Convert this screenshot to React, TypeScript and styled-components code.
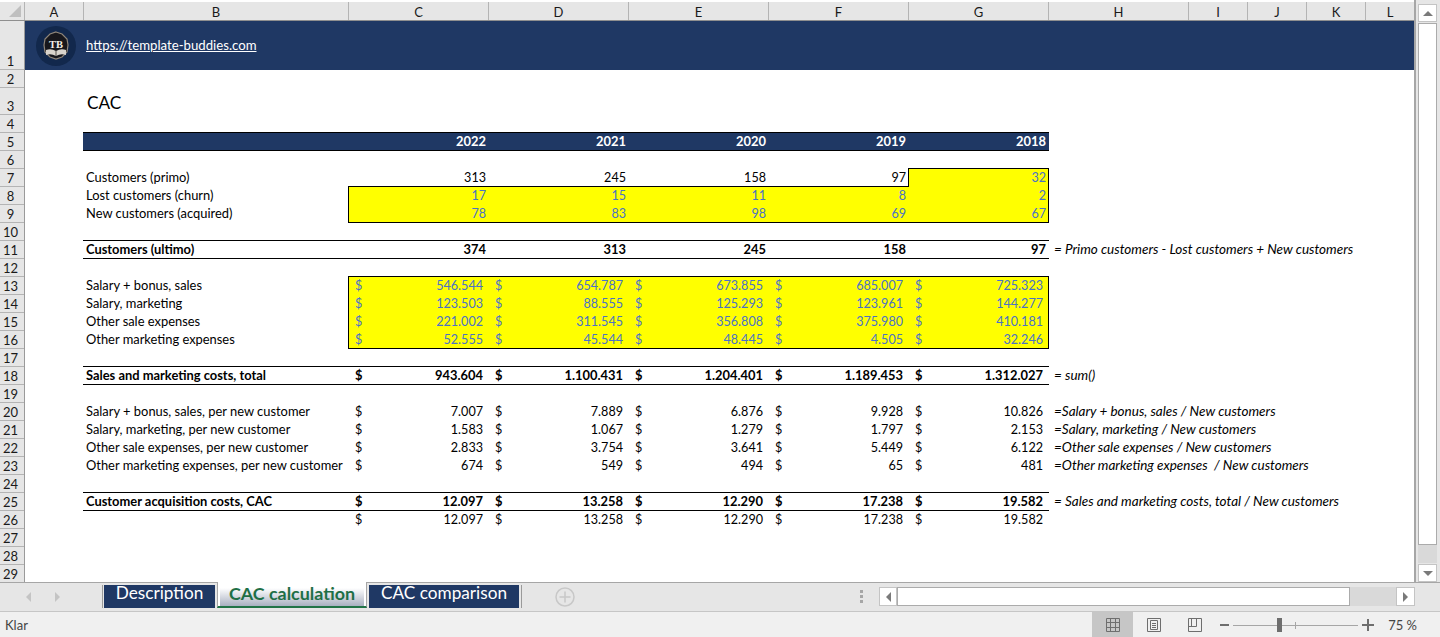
import React, { FC } from "react";
import styled, { createGlobalStyle } from "styled-components";

const NAVY = "#1f3864";
const INPUT_BLUE = "#4a72c6";
const FONT = `Lato, "Open Sans", sans-serif`;

const COLUMNS = [
  { name: "A", width: 59 },
  { name: "B", width: 265 },
  { name: "C", width: 140 },
  { name: "D", width: 140 },
  { name: "E", width: 140 },
  { name: "F", width: 140 },
  { name: "G", width: 140 },
  { name: "H", width: 140 },
  { name: "I", width: 59 },
  { name: "J", width: 59 },
  { name: "K", width: 59 },
  { name: "L", width: 49 },
];

const ROW_TEMPLATE = "58px 266px repeat(6, 140px) 59px 59px 59px 49px";

const ROW_HEIGHTS: Record<number, number> = { 1: 49, 3: 27 };
const rowHeight = (n: number) => ROW_HEIGHTS[n] || 18;

const GlobalStyle = createGlobalStyle`
  html, body {
    margin: 0;
    padding: 0;
    background: #e6e6e6;
    overflow: hidden;
  }
  #root {
    width: 1440px;
    height: 637px;
  }
`;

const Window = styled.div`
  width: 1440px;
  height: 637px;
  display: flex;
  flex-direction: column;
  font-family: ${FONT};
  color: #000;
  overflow: hidden;
`;

const Workspace = styled.div`
  display: flex;
  height: 583px;
  flex: none;
  background: #e6e6e6;
  border-bottom: 1px solid #a6a6a6;
  box-sizing: border-box;
`;

const SheetArea = styled.div`
  width: 1416px;
  flex: none;
  display: flex;
  flex-direction: column;
  border-right: 2px solid #a6a6a6;
  box-sizing: border-box;
  overflow: hidden;
`;

const ColumnHeaders = styled.div`
  height: 21px;
  flex: none;
  display: flex;
  box-sizing: border-box;
  padding-top: 2px;
  background: linear-gradient(#fff 2px, #e6e6e6 2px);
  border-bottom: 1px solid #8f8f8f;
`;

const Corner = styled.div`
  width: 25px;
  flex: none;
  position: relative;
  box-sizing: border-box;
  border-right: 1px solid #b4b4b4;
  &::after {
    content: "";
    position: absolute;
    right: 3px;
    bottom: 3px;
    border-style: solid;
    border-width: 0 0 12px 12px;
    border-color: transparent transparent #bfbfbf transparent;
  }
`;

const ColumnHeader = styled.div<{ $width: number }>`
  width: ${(p) => p.$width}px;
  flex: none;
  box-sizing: border-box;
  border-right: 1px solid #b4b4b4;
  text-align: center;
  font-size: 13px;
  line-height: 20px;
  color: #1a1a1a;
`;

const SheetBody = styled.div`
  flex: 1;
  display: flex;
  min-height: 0;
  overflow: hidden;
`;

const RowHeaders = styled.div`
  width: 25px;
  flex: none;
  box-sizing: border-box;
  border-right: 1px solid #9a9a9a;
`;

const RowHeader = styled.div<{ $height: number }>`
  height: ${(p) => p.$height}px;
  box-sizing: border-box;
  border-bottom: 1px solid #b4b4b4;
  display: flex;
  align-items: flex-end;
  justify-content: center;
  padding-right: 3px;
  font-size: 13px;
  line-height: 16px;
  color: #1a1a1a;
`;

const Cells = styled.div`
  flex: 1;
  min-width: 0;
  background: #fff;
`;

const Row = styled.div<{ $height: number }>`
  display: grid;
  grid-template-columns: ${ROW_TEMPLATE};
  height: ${(p) => p.$height}px;
  font-size: 12.6px;
  line-height: 18px;
`;

const Banner = styled.div`
  grid-column: 1 / -1;
  background: ${NAVY};
  display: flex;
  align-items: center;
  padding-left: 11px;
  gap: 10px;
  height: 49px;
`;

const BannerLink = styled.a`
  color: #fff;
  font-size: 13.2px;
  margin-bottom: 2px;
  text-decoration: underline;
`;

const Title = styled.div`
  grid-column: 2;
  padding-left: 4px;
  font-size: 17.2px;
  line-height: 30px;
`;

type Edges = { t?: boolean; b?: boolean; l?: boolean; r?: boolean };

const edgeShadow = (e: Edges) => {
  const parts: string[] = [];
  if (e.t) parts.push("0 -1px 0 #000");
  if (e.l) parts.push("-1px 0 0 #000");
  if (e.t && e.l) parts.push("-1px -1px 0 #000");
  if (e.b) parts.push("inset 0 -1px 0 #000");
  if (e.r) parts.push("inset -1px 0 0 #000");
  return parts.length ? parts.join(",") : "none";
};

const Cell = styled.div<{
  $edges?: Edges;
  $fill?: string;
  $bold?: boolean;
  $color?: string;
}>`
  box-sizing: border-box;
  min-width: 0;
  white-space: nowrap;
  background: ${(p) => p.$fill || "transparent"};
  box-shadow: ${(p) => edgeShadow(p.$edges || {})};
  font-weight: ${(p) => (p.$bold ? 700 : 400)};
  color: ${(p) => p.$color || "#000"};
`;

const LabelCell = styled(Cell)`
  grid-column: 2;
  padding-left: 3px;
  font-size: 12.9px;
  line-height: 17px;
`;

const ValueCell = styled(Cell)<{ $money?: boolean }>`
  display: flex;
  justify-content: ${(p) => (p.$money ? "space-between" : "flex-end")};
  padding: 0 ${(p) => (p.$money ? 6 : 3)}px 0 ${(p) => (p.$money ? 6 : 2)}px;
  font-size: ${(p) => (p.$bold ? 12.9 : 12.6)}px;
  line-height: ${(p) => (p.$bold ? 17 : 18)}px;
`;

const NoteCell = styled.div`
  font-style: italic;
  font-size: 13.5px;
  line-height: 17px;
  padding-left: 5px;
  white-space: pre;
`;

const VScroll = styled.div`
  flex: 1;
  display: flex;
  flex-direction: column;
  padding: 4px 0 0 2px;
  gap: 1px;
  box-sizing: border-box;
`;

const ScrollButton = styled.div`
  width: 19px;
  height: 18px;
  flex: none;
  background: #fff;
  border: 1px solid #c4c4c4;
  box-sizing: border-box;
  display: flex;
  align-items: center;
  justify-content: center;
`;

const VTrack = styled.div`
  width: 19px;
  flex: 1;
  background: #d9d9d9;
`;

const VThumb = styled.div`
  height: 522px;
  background: #fff;
  border: 1px solid #ababab;
  box-sizing: border-box;
`;

const Arrow = styled.div<{ $dir: "up" | "down" | "left" | "right"; $color?: string }>`
  width: 0;
  height: 0;
  border-style: solid;
  ${(p) => {
    const c = p.$color || "#7a7a7a";
    switch (p.$dir) {
      case "up":
        return `border-width: 0 5px 5px 5px; border-color: transparent transparent ${c} transparent;`;
      case "down":
        return `border-width: 5px 5px 0 5px; border-color: ${c} transparent transparent transparent;`;
      case "left":
        return `border-width: 5px 5px 5px 0; border-color: transparent ${c} transparent transparent;`;
      default:
        return `border-width: 5px 0 5px 5px; border-color: transparent transparent transparent ${c};`;
    }
  }}
`;

const TabBar = styled.div`
  height: 29px;
  flex: none;
  display: flex;
  align-items: flex-start;
  background: #e6e6e6;
  box-sizing: border-box;
  border-bottom: 1px solid #c6c6c6;
`;

const TabNav = styled.div`
  width: 102px;
  height: 28px;
  flex: none;
  display: flex;
  align-items: center;
  gap: 24px;
  padding-left: 26px;
  box-sizing: border-box;
`;

const TabStrip = styled.div`
  display: flex;
  align-items: flex-start;
  gap: 2px;
  height: 23px;
  margin-top: 2px;
  border-left: 1px solid #9a9a9a;
  border-right: 1px solid #9a9a9a;
  padding: 0 2px 0 1px;
`;

const Tab = styled.div<{ $width: number }>`
  width: ${(p) => p.$width}px;
  height: 23px;
  flex: none;
  box-sizing: border-box;
  text-align: center;
  font-size: 17.2px;
  line-height: 16px;
  color: #fff;
  background: ${NAVY};
`;

const ActiveTab = styled(Tab)`
  height: 26px;
  margin-top: -3px;
  padding-top: 3px;
  font-size: 17.9px;
  font-weight: 700;
  color: #1e6f46;
  background: linear-gradient(#fff 25%, #a9b0c0);
  border-left: 1px solid #a6a6a6;
  border-right: 1px solid #a6a6a6;
  border-bottom: 2px solid #217346;
  box-shadow: inset 2px 0 0 #fff, inset -2px 0 0 #fff;
`;

const AddSheet = styled.div`
  width: 20px;
  height: 20px;
  margin: 4px 0 0 33px;
  flex: none;
  color: #c8c8c8;
`;

const HScrollArea = styled.div`
  margin-left: auto;
  padding: 4px 25px 0 0;
  display: flex;
  align-items: center;
  flex: none;
  box-sizing: border-box;
`;

const SplitDots = styled.div`
  width: 3px;
  height: 13px;
  margin-right: 16px;
  flex: none;
  background: repeating-linear-gradient(#a6a6a6 0 3px, transparent 3px 5px);
`;

const HButton = styled(ScrollButton)`
  height: 19px;
`;

const HButtonLeft = styled(HButton)`
  width: 18px;
`;

const HTrack = styled.div`
  width: 499px;
  height: 19px;
  flex: none;
  background: #d9d9d9;
  display: flex;
`;

const HThumb = styled.div`
  width: 453px;
  background: #fff;
  border: 1px solid #ababab;
  box-sizing: border-box;
`;

const StatusBar = styled.div`
  flex: 1;
  display: flex;
  align-items: center;
  background: #f0f0f0;
  padding-left: 5px;
  font-size: 13px;
  line-height: 22px;
  color: #444;
`;

const StatusRight = styled.div`
  margin-left: auto;
  display: flex;
  align-items: center;
  height: 100%;
`;

const ViewButton = styled.div<{ $active?: boolean }>`
  width: 41px;
  height: 100%;
  display: flex;
  align-items: center;
  justify-content: center;
  background: ${(p) => (p.$active ? "#c6c6c6" : "transparent")};
`;

const Zoom = styled.div`
  display: flex;
  align-items: center;
  margin-left: 5px;
  height: 100%;
`;

const ZoomLabel = styled.div`
  width: 43px;
  margin-right: 23px;
  text-align: right;
  font-size: 13px;
  color: #444;
`;

const Logo: FC = () => (
  <svg width="40" height="40" viewBox="0 0 40 40">
    <circle cx="20" cy="20" r="20" fill="#12284c" />
    <path
      d="M20 6l6 2 5 5 1 6-1 7-5 5-6 2-6-2-5-5-1-7 1-6 5-5z"
      fill="#17171c"
      stroke="#8f867a"
      strokeWidth="1.2"
    />
    <text
      x="20"
      y="22"
      textAnchor="middle"
      fontSize="10.5"
      fontFamily="Liberation Serif, serif"
      fontWeight="700"
      fill="#f2efe9"
    >
      TB
    </text>
    <path d="M10 24 q5 -2 10 1 q5 -3 10 -1 v5 q-5 -2 -10 1 q-5 -3 -10 -1z" fill="#d9d4cc" />
    <path d="M20 25v5" stroke="#55504a" fill="none" />
  </svg>
);

const GridIcon: FC = () => (
  <svg width="14" height="14" viewBox="0 0 14 14" fill="none" stroke="#6e6e6e">
    <path d="M.5.5h13v13H.5zM4.5.5v13M9.5.5v13M.5 4.5h13M.5 9.5h13" />
  </svg>
);

const PageIcon: FC = () => (
  <svg width="14" height="14" viewBox="0 0 14 14" fill="none" stroke="#6e6e6e">
    <path d="M.5.5h13v13H.5zM3.5 2.5h7v9h-7zM5 5.5h4M5 7.5h4M5 9.5h4" />
  </svg>
);

const BreakIcon: FC = () => (
  <svg width="14" height="14" viewBox="0 0 14 14" fill="none" stroke="#6e6e6e">
    <path d="M.5.5h13v13H.5zM.5 8.5h8M3.5.5v8M8.5.5v8" />
  </svg>
);

const ZoomSlider: FC = () => (
  <svg width="154" height="16" viewBox="0 0 154 16">
    <path d="M0 7h9v2H0z" fill="#6e6e6e" />
    <path d="M13 8.5h125" stroke="#a6a6a6" fill="none" />
    <path d="M75.5 5v7" stroke="#a6a6a6" fill="none" />
    <rect x="57" y="1" width="5" height="14" fill="#6e6e6e" />
    <path d="M142 7h12v2h-12zM147 2h2v12h-2z" fill="#6e6e6e" />
  </svg>
);

const years = ["2022", "2021", "2020", "2019", "2018"];

type Values = (string | number)[];

const costRows: [string, Values][] = [
  ["Salary + bonus, sales", ["546.544", "654.787", "673.855", "685.007", "725.323"]],
  ["Salary, marketing", ["123.503", "88.555", "125.293", "123.961", "144.277"]],
  ["Other sale expenses", ["221.002", "311.545", "356.808", "375.980", "410.181"]],
  ["Other marketing expenses", ["52.555", "45.544", "48.445", "4.505", "32.246"]],
];

const perCustomerRows: [string, Values, string][] = [
  ["Salary + bonus, sales, per new customer", ["7.007", "7.889", "6.876", "9.928", "10.826"], "=Salary + bonus, sales / New customers"],
  ["Salary, marketing, per new customer", ["1.583", "1.067", "1.279", "1.797", "2.153"], "=Salary, marketing / New customers"],
  ["Other sale expenses, per new customer", ["2.833", "3.754", "3.641", "5.449", "6.122"], "=Other sale expenses / New customers"],
  ["Other marketing expenses, per new customer", ["674", "549", "494", "65", "481"], "=Other marketing expenses  / New customers"],
];

// yellow input block: outline only on the outer sides
const blockEdges = (col: number, first: boolean, last: boolean): Edges => ({
  t: first,
  b: last,
  l: col === 0,
  r: col === 4,
});

const Spacer: FC<{ n: number }> = ({ n }) => <Row $height={rowHeight(n)} />;

const TotalRow: FC<{ label: string; values: Values; money?: boolean; note?: string }> = ({
  label,
  values,
  money,
  note,
}) => (
  <Row $height={18}>
    <LabelCell $bold $edges={{ t: true, b: true }}>
      {label}
    </LabelCell>
    {values.map((v, i) => (
      <ValueCell key={i} $bold $money={money} $edges={{ t: true, b: true }}>
        {money && <span>$</span>}
        <span>{v}</span>
      </ValueCell>
    ))}
    {note && <NoteCell>{note}</NoteCell>}
  </Row>
);

const Sheet: FC = () => (
  <Cells>
    <Row $height={49}>
      <Banner>
        <Logo />
        <BannerLink>https://template-buddies.com</BannerLink>
      </Banner>
    </Row>
    <Spacer n={2} />
    <Row $height={27}>
      <Title>CAC</Title>
    </Row>
    <Spacer n={4} />
    <Row $height={18}>
      <LabelCell $fill={NAVY} $edges={{ t: true, b: true }} />
      {years.map((y) => (
        <ValueCell key={y} $bold $fill={NAVY} $color="#fff" $edges={{ t: true, b: true }}>
          {y}
        </ValueCell>
      ))}
    </Row>
    <Spacer n={6} />
    <Row $height={18}>
      <LabelCell>Customers (primo)</LabelCell>
      {[313, 245, 158, 97].map((v) => (
        <ValueCell key={v}>{v}</ValueCell>
      ))}
      <ValueCell $fill="#ffff00" $color={INPUT_BLUE} $edges={{ t: true, l: true, r: true }}>
        32
      </ValueCell>
    </Row>
    <Row $height={18}>
      <LabelCell>Lost customers (churn)</LabelCell>
      {[17, 15, 11, 8, 2].map((v, i) => (
        <ValueCell
          key={i}
          $fill="#ffff00"
          $color={INPUT_BLUE}
          $edges={{ t: i < 4, l: i === 0, r: i === 4 }}
        >
          {v}
        </ValueCell>
      ))}
    </Row>
    <Row $height={18}>
      <LabelCell>New customers (acquired)</LabelCell>
      {[78, 83, 98, 69, 67].map((v, i) => (
        <ValueCell key={i} $fill="#ffff00" $color={INPUT_BLUE} $edges={blockEdges(i, false, true)}>
          {v}
        </ValueCell>
      ))}
    </Row>
    <Spacer n={10} />
    <TotalRow
      label="Customers (ultimo)"
      values={[374, 313, 245, 158, 97]}
      note="= Primo customers - Lost customers + New customers"
    />
    <Spacer n={12} />
    {costRows.map(([label, values], r) => (
      <Row $height={18} key={label}>
        <LabelCell>{label}</LabelCell>
        {values.map((v, i) => (
          <ValueCell
            key={i}
            $money
            $fill="#ffff00"
            $color={INPUT_BLUE}
            $edges={blockEdges(i, r === 0, r === costRows.length - 1)}
          >
            <span>$</span>
            <span>{v}</span>
          </ValueCell>
        ))}
      </Row>
    ))}
    <Spacer n={17} />
    <TotalRow
      label="Sales and marketing costs, total"
      values={["943.604", "1.100.431", "1.204.401", "1.189.453", "1.312.027"]}
      money
      note="= sum()"
    />
    <Spacer n={19} />
    {perCustomerRows.map(([label, values, note]) => (
      <Row $height={18} key={label}>
        <LabelCell>{label}</LabelCell>
        {values.map((v, i) => (
          <ValueCell key={i} $money>
            <span>$</span>
            <span>{v}</span>
          </ValueCell>
        ))}
        <NoteCell>{note}</NoteCell>
      </Row>
    ))}
    <Spacer n={24} />
    <TotalRow
      label="Customer acquisition costs, CAC"
      values={["12.097", "13.258", "12.290", "17.238", "19.582"]}
      money
      note="= Sales and marketing costs, total / New customers"
    />
    <Row $height={18}>
      <LabelCell />
      {["12.097", "13.258", "12.290", "17.238", "19.582"].map((v, i) => (
        <ValueCell key={i} $money>
          <span>$</span>
          <span>{v}</span>
        </ValueCell>
      ))}
    </Row>
  </Cells>
);

const rowNumbers = Array.from({ length: 29 }, (_, i) => i + 1);

const App: FC = () => (
  <Window>
    <GlobalStyle />
    <Workspace>
      <SheetArea>
        <ColumnHeaders>
          <Corner />
          {COLUMNS.map((c) => (
            <ColumnHeader key={c.name} $width={c.width}>
              {c.name}
            </ColumnHeader>
          ))}
        </ColumnHeaders>
        <SheetBody>
          <RowHeaders>
            {rowNumbers.map((n) => (
              <RowHeader key={n} $height={rowHeight(n)}>
                {n}
              </RowHeader>
            ))}
          </RowHeaders>
          <Sheet />
        </SheetBody>
      </SheetArea>
      <VScroll>
        <ScrollButton>
          <Arrow $dir="up" />
        </ScrollButton>
        <VTrack>
          <VThumb />
        </VTrack>
        <ScrollButton>
          <Arrow $dir="down" />
        </ScrollButton>
      </VScroll>
    </Workspace>
    <TabBar>
      <TabNav>
        <Arrow $dir="left" $color="#c4c4c4" />
        <Arrow $dir="right" $color="#c4c4c4" />
      </TabNav>
      <TabStrip>
        <Tab $width={111}>Description</Tab>
        <ActiveTab $width={150}>CAC calculation</ActiveTab>
        <Tab $width={150}>CAC comparison</Tab>
      </TabStrip>
      <AddSheet>
        <svg width="20" height="20" viewBox="0 0 20 20" fill="none" stroke="currentColor" strokeWidth="1.5">
          <circle cx="10" cy="10" r="9" />
          <path d="M10 4.5v11M4.5 10h11" />
        </svg>
      </AddSheet>
      <HScrollArea>
        <SplitDots />
        <HButtonLeft>
          <Arrow $dir="left" />
        </HButtonLeft>
        <HTrack>
          <HThumb />
        </HTrack>
        <HButton>
          <Arrow $dir="right" />
        </HButton>
      </HScrollArea>
    </TabBar>
    <StatusBar>
      Klar
      <StatusRight>
        <ViewButton $active>
          <GridIcon />
        </ViewButton>
        <ViewButton>
          <PageIcon />
        </ViewButton>
        <ViewButton>
          <BreakIcon />
        </ViewButton>
        <Zoom>
          <ZoomSlider />
        </Zoom>
        <ZoomLabel>75 %</ZoomLabel>
      </StatusRight>
    </StatusBar>
  </Window>
);

export default App;
